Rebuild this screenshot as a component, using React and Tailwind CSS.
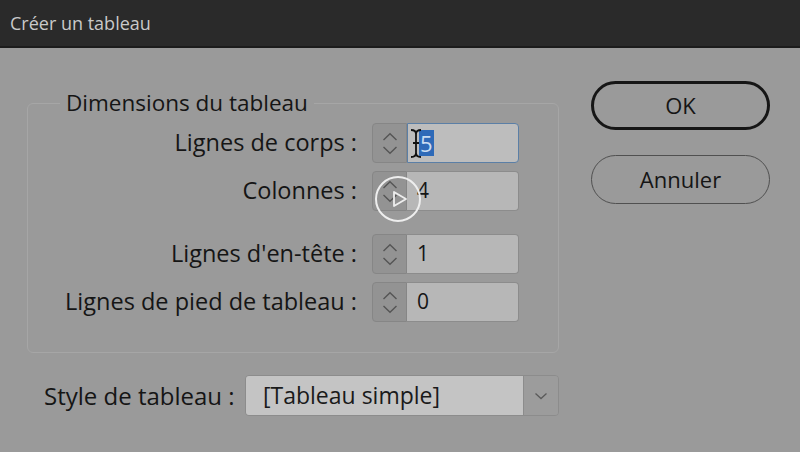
import React from "react";

const font = { fontFamily: '"Open Sans", "Noto Sans", Arial, sans-serif' };

function Stepper() {
  return (
    <div className="w-[35px] h-full flex flex-col items-center justify-center gap-[5px] bg-[#939393] border border-[#868686] rounded-l-[4px]">
      <svg width="16" height="9" viewBox="0 0 16 9">
        <path d="M1.5 8 L8 1.8 L14.5 8" fill="none" stroke="#555" strokeWidth="1.4" />
      </svg>
      <svg width="16" height="9" viewBox="0 0 16 9">
        <path d="M1.5 1 L8 7.2 L14.5 1" fill="none" stroke="#555" strokeWidth="1.4" />
      </svg>
    </div>
  );
}

function SpinField({ value, focused }) {
  return (
    <div className="flex h-[40px] w-[147px]">
      <Stepper />
      <div
        className={
          focused
            ? "relative flex-1 flex items-center pl-[10px] bg-[#bdbdbd] border-[1.5px] border-[#5b7fa6] rounded-r-[4px] text-[22px] text-[#151515]"
            : "relative flex-1 flex items-center pl-[10px] bg-[#b7b7b7] border border-[#8c8c8c] border-l-0 rounded-r-[4px] text-[21px] text-[#151515]"
        }
      >
        {focused ? (
          <>
            <span className="bg-[#2e6ab8] text-[#c9dcf2] leading-[26px] px-[1px] ml-[1px]">{value}</span>
            <svg className="absolute left-[1px] top-[4px]" width="14" height="31" viewBox="0 0 14 31">
              <path d="M2 2 Q7 2 7 6 Q7 2 12 2 M7 6 V25 M2 29 Q7 29 7 25 Q7 29 12 29 M4 15 H10" fill="none" stroke="#111" strokeWidth="1.8" />
            </svg>
          </>
        ) : (
          <span>{value}</span>
        )}
      </div>
    </div>
  );
}

function Row({ label, value, focused }) {
  return (
    <div className="flex items-center">
      <div className="w-[330px] text-right pr-[1px] text-[23.5px] text-[#151515] whitespace-nowrap">{label}</div>
      <div className="ml-[14px]">
        <SpinField value={value} focused={focused} />
      </div>
    </div>
  );
}

export default function App() {
  return (
    <div className="relative w-[800px] h-[452px] overflow-hidden bg-[#9a9a9a]" style={font}>
      <div className="h-[48px] bg-[#2a2a2a] border-b-2 border-[#1c1c1c] flex items-center pl-[10px] text-[18px] text-[#c9c9c9]">
        Créer un tableau
      </div>

      <div className="flex">
        <div className="w-[560px] pl-[27px]">
          <fieldset className="mt-[39px] w-[532px] h-[266px] border border-[#a6a6a6] rounded-[6px]">
            <legend className="ml-[32px] px-[6px] text-[22.5px] text-[#151515] leading-[32px]">
              Dimensions du tableau
            </legend>
            <div className="flex flex-col mt-[4px]">
              <Row label="Lignes de corps :" value="5" focused />
              <div className="h-[8px]" />
              <Row label="Colonnes :" value="4" />
              <div className="h-[23px]" />
              <Row label="Lignes d'en-tête :" value="1" />
              <div className="h-[8px]" />
              <Row label="Lignes de pied de tableau :" value="0" />
            </div>
          </fieldset>

          <div className="flex items-center mt-[22px]">
            <div className="pl-[17px] w-[218px] text-[24px] text-[#151515] whitespace-nowrap">Style de tableau :</div>
            <div className="flex h-[41px] w-[314px] border border-[#8c8c8c] rounded-[4px] overflow-hidden">
              <div className="flex-1 bg-[#c4c4c4] flex items-center pl-[17px] text-[23px] text-[#1a1a1a]">
                [Tableau simple]
              </div>
              <div className="w-[35px] bg-[#9c9c9c] border-l border-[#8c8c8c] flex items-center justify-center">
                <svg width="14" height="8" viewBox="0 0 14 8">
                  <path d="M1.5 1.5 L7 6.5 L12.5 1.5" fill="none" stroke="#5a5a5a" strokeWidth="1.3" />
                </svg>
              </div>
            </div>
          </div>
        </div>

        <div className="ml-[31px] pt-[33px] flex flex-col gap-[25px]">
          <button className="w-[179px] h-[49px] rounded-full border-[3px] border-[#161616] text-[22px] text-[#151515] flex items-center justify-center">
            OK
          </button>
          <button className="w-[179px] h-[49px] rounded-full border-[1.5px] border-[#505050] text-[22px] text-[#151515] flex items-center justify-center">
            Annuler
          </button>
        </div>
      </div>

      <div className="absolute left-[375px] top-[176px] w-[46px] h-[46px] rounded-full border-2 border-[#eeeeee] flex items-center justify-center">
        <svg width="18" height="18" viewBox="0 0 18 18" className="ml-[4px]">
          <path d="M3 2 L15 9 L3 16 Z" fill="none" stroke="#eeeeee" strokeWidth="1.8" strokeLinejoin="round" />
        </svg>
      </div>
    </div>
  );
}
